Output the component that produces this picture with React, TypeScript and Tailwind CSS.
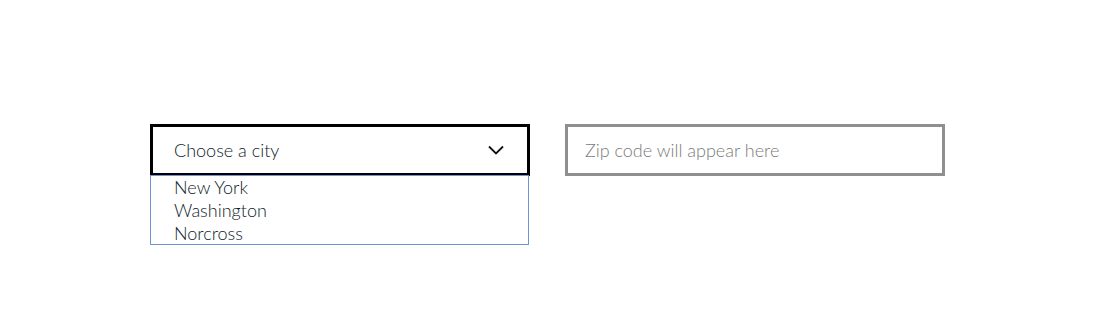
import React from "react";

export default function App() {
  return (
    <div className="w-[1113px] h-[334px] bg-white" style={{ fontFamily: "Lato, 'Noto Sans', sans-serif" }}>
      <div className="flex gap-[35px] pt-[124px] pl-[150px]">
        <div className="relative w-[380px]">
          <div className="h-[52px] border-[3px] border-black flex items-center justify-between pl-[21px] pr-[23px] text-[18px] font-light text-[#0e1c28]">
            <span>Choose a city</span>
            <svg width="16" height="10" viewBox="0 0 16 10" fill="none">
              <path d="M1 1.5 L8 8.5 L15 1.5" stroke="#111" strokeWidth="1.8" />
            </svg>
          </div>
          <div className="absolute left-0 top-[51px] w-[379px] h-[70px] border border-[#6f93d3] bg-white flex flex-col pl-[23px] text-[18px] font-light leading-[23px] text-[#0e1c28]">
            <span>New York</span>
            <span>Washington</span>
            <span>Norcross</span>
          </div>
        </div>
        <div className="w-[380px] h-[52px] border-[3px] border-[#8f8f8f] flex items-center pl-[17px] text-[18px] font-light text-[#7a7a7a]">
          Zip code will appear here
        </div>
      </div>
    </div>
  );
}
